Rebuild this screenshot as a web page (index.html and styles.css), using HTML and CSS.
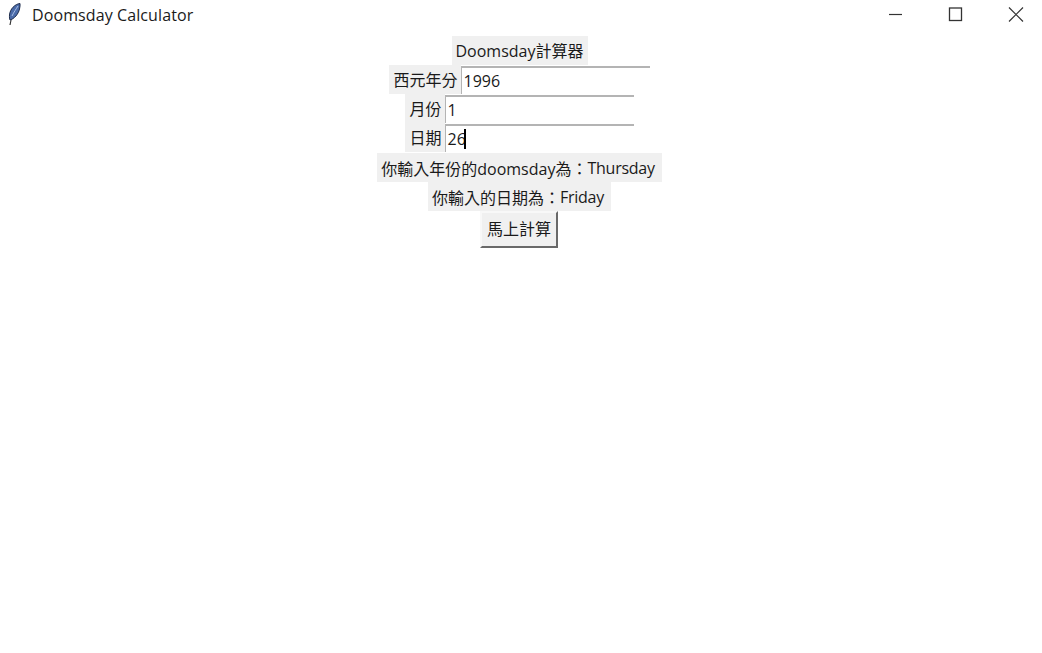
FILE: index.html
```html
<!DOCTYPE html>
<html lang="zh-Hant">
<head>
  <meta charset="UTF-8" />
  <title>Doomsday Calculator</title>
  <link rel="stylesheet" href="styles.css">
</head>
<body>

<div class="titlebar">
  <svg class="app-icon" width="16" height="23" viewBox="0 0 16 23">
    <path d="M4 22 C4.5 17 6 13 8 9" fill="none" stroke="#333" stroke-width="1.2"/>
    <path d="M14 .5 C9 1 4 6 3.5 12 C3.3 14.5 3.6 16 4 17 C8 16 12.5 11 13.5 6 C14 4 14.2 2 14 .5 Z" fill="#4a6aa8" stroke="#1d2b4a" stroke-width="1"/>
    <path d="M12 3 C10 6 8 9 6 13" fill="none" stroke="#a9bfe6" stroke-width="1"/>
  </svg>
  <span class="title">Doomsday Calculator</span>
  <div class="win-buttons">
    <svg width="16" height="16" viewBox="0 0 16 16"><path d="M3 7.5 H16" stroke="#333" stroke-width="1.2" fill="none"/></svg>
    <svg width="16" height="16" viewBox="0 0 16 16"><rect x="2.5" y="1" width="12" height="12.5" stroke="#333" stroke-width="1.3" fill="none"/></svg>
    <svg width="16" height="16" viewBox="0 0 16 16"><path d="M1 .5 L15 14.5 M15 .5 L1 14.5" stroke="#333" stroke-width="1.2" fill="none"/></svg>
  </div>
</div>

<div class="app">
  <div class="label">Doomsday計算器</div>

  <div class="row">
    <label class="label">西元年分</label>
    <input class="entry" type="text" value="1996">
  </div>
  <div class="row">
    <label class="label">月份</label>
    <input class="entry" type="text" value="1">
  </div>
  <div class="row">
    <label class="label">日期</label>
    <div class="entry focused">26<span class="caret"></span></div>
  </div>

  <div class="label result first">你輸入年份的doomsday為：<span class="day">Thursday</span></div>
  <div class="label result">你輸入的日期為：<span class="day">Friday</span></div>
  <button class="btn" type="button">馬上計算</button>
</div>

</body>
</html>
```

FILE: styles.css
```css
body {
  margin: 0;
  background: white;
  color: #1a1a1a;
  font-family: "Open Sans", "Noto Sans CJK TC", sans-serif;
  font-size: 16px;
}

.titlebar {
  display: flex;
  align-items: center;
  height: 30px;
  padding-left: 6px;
}

.app-icon {
  margin-right: 10px;
  margin-bottom: 1px;
}

.title {
  flex: 1;
  letter-spacing: 0.1px;
}

.win-buttons {
  display: flex;
  gap: 45px;
  margin-right: 18px;
}

.app {
  display: flex;
  flex-direction: column;
  align-items: center;
  width: 1039px;
  padding-top: 6px;
}

.label {
  box-sizing: border-box;
  display: flex;
  align-items: center;
  height: 29px;
  padding: 0 4px 1px;
  background: #f0f0f0;
  white-space: nowrap;
}

.row {
  display: flex;
  height: 29px;
}

.row .label {
  padding-right: 3px;
}

.entry {
  box-sizing: border-box;
  width: 189px;
  height: 28px;
  margin: 1px 0 0;
  padding: 0 0 0 2px;
  border: 0;
  border-top: 2px solid #b4b4b4;
  border-left: 1px solid #b4b4b4;
  outline: none;
  background: white;
  color: #1a1a1a;
  font: inherit;
}

.focused {
  display: flex;
  align-items: center;
}

.caret {
  width: 2px;
  height: 20px;
  margin-left: -2px;
  background: black;
}

.result {
  padding: 0 7px 0 4px;
}

.first {
  margin-top: 1px;
}

.day {
  letter-spacing: -0.25px;
}

.btn {
  box-sizing: border-box;
  width: 78px;
  height: 37px;
  margin-right: 1px;
  padding: 0 0 3px;
  border: 2px solid;
  border-color: #f8f8f8 #696969 #696969 #f8f8f8;
  background: #f0f0f0;
  color: #1a1a1a;
  font: inherit;
}
```
